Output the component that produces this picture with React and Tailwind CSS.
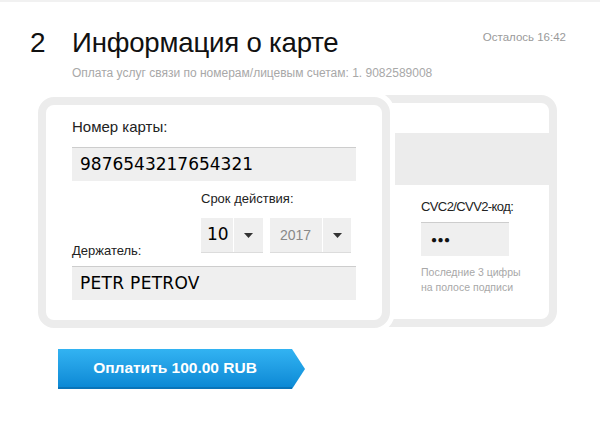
import React from 'react';

const Arrow = () => (
  <svg width="9" height="5" viewBox="0 0 9 5">
    <path d="M0 0 L9 0 L4.5 5 Z" fill="#333" />
  </svg>
);

const App = () => {
  return (
    <div className="w-[600px] h-[422px] bg-white border-t-2 border-[#f1f1f1] font-['Liberation_Sans',Arial,sans-serif] text-[#111] overflow-hidden">
      <div className="flex items-start pl-[30px] pr-[34px] pt-[25px]">
        <div className="text-[28px] leading-[32px] w-[42px]">2</div>
        <div className="text-[27.6px] leading-[32px] tracking-[-0.2px]">Информация о карте</div>
        <div className="ml-auto mt-[2px] text-[11.5px] text-[#9a9a9a]">Осталось 16:42</div>
      </div>
      <div className="pl-[72px] mt-[7px] text-[12px] leading-[14px] text-[#a8a8a8]">
        Оплата услуг связи по номерам/лицевым счетам: 1. 9082589008
      </div>

      <div className="flex items-start ml-[38px] mt-[17px]">
        {/* front of card */}
        <div className="relative z-10 w-[352px] h-[231px] rounded-[16px] border-[8px] border-[#ececec] bg-white shadow-[0_0_0_5px_#fff] pl-[26px] pt-[13px]">
          <div className="text-[15px] leading-[18px] text-[#222]">Номер карты:</div>
          <div className="mt-[11px] w-[284px] h-[34px] bg-[#efefef] border-t border-[#cdcdcd] flex items-center pl-[8px] font-['DejaVu_Sans',sans-serif] text-[17px] text-black">
            9876543217654321
          </div>
          <div className="flex mt-[10px]">
            <div className="w-[129px] flex items-end">
              <div className="text-[13px] leading-[15px] text-[#222] mb-[-5px]">Держатель:</div>
            </div>
            <div>
              <div className="text-[13px] leading-[15px] text-[#222]">Срок действия:</div>
              <div className="flex gap-[7px] mt-[12px]">
                <div className="w-[62px] h-[35px] bg-[#efefef] border-b border-[#dcdcdc] flex items-center">
                  <div className="w-[32px] pl-[6px] font-['DejaVu_Sans',sans-serif] text-[17px] text-black">10</div>
                  <div className="w-px h-full bg-[#e2e2e2] border-l border-white"></div>
                  <div className="flex-1 flex justify-center"><Arrow /></div>
                </div>
                <div className="w-[81px] h-[35px] bg-[#efefef] border-b border-[#dcdcdc] flex items-center">
                  <div className="w-[52px] pl-[10px] text-[14px] text-[#888]">2017</div>
                  <div className="w-px h-full bg-[#e2e2e2] border-l border-white"></div>
                  <div className="flex-1 flex justify-center"><Arrow /></div>
                </div>
              </div>
            </div>
          </div>
          <div className="mt-[13px] w-[284px] h-[34px] bg-[#efefef] border-t border-[#cdcdcd] flex items-center pl-[8px] font-['DejaVu_Sans',sans-serif] text-[17px] tracking-[0.3px] text-black">
            PETR PETROV
          </div>
        </div>

        {/* back of card */}
        <div className="-ml-[60px] -mt-[2px] w-[227px] h-[232px] rounded-[16px] border-[8px] border-[#ececec] bg-white">
          <div className="mt-[30px] h-[52px] bg-[#ececec]"></div>
          <div className="pl-[83px] pt-[14px]">
            <div className="text-[13px] leading-[15px] text-[#222] tracking-[-0.6px]">CVC2/CVV2-код:</div>
            <div className="mt-[8px] w-[88px] h-[34px] bg-[#efefef] border-t border-[#cdcdcd] flex items-center pl-[10px] text-[10px] tracking-[0.5px] text-[#111]">
              ●●●
            </div>
            <div className="mt-[9px] text-[10.5px] leading-[15px] text-[#a8a8a8]">
              Последние 3 цифры<br />на полосе подписи
            </div>
          </div>
        </div>
      </div>

      <div className="ml-[58px] mt-[21px] w-[247px] h-[40px] flex">
        <div className="w-[234px] h-full bg-linear-to-b from-[#32b3f2] to-[#0b89d5] border-b-2 border-[#0a74b8] flex items-center justify-center text-white font-bold text-[15.5px]">
          Оплатить 100.00 RUB
        </div>
        <svg width="13" height="40" viewBox="0 0 13 40">
          <defs>
            <linearGradient id="g" x1="0" y1="0" x2="0" y2="1">
              <stop offset="0" stopColor="#32b3f2" />
              <stop offset="1" stopColor="#0b89d5" />
            </linearGradient>
          </defs>
          <path d="M0 0 L0 40 L13 20 Z" fill="url(#g)" />
        </svg>
      </div>
    </div>
  );
};

export default App;
